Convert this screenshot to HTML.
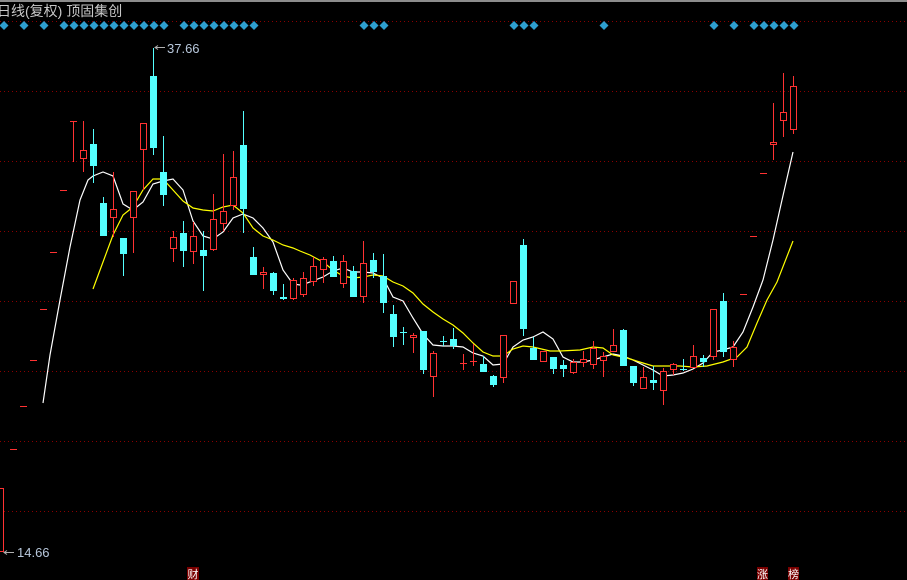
<!DOCTYPE html>
<html><head><meta charset="utf-8"><style>
html,body{margin:0;padding:0;background:#000;width:907px;height:580px;overflow:hidden}
svg{display:block}
text{font-family:"Liberation Sans","Noto Sans CJK SC",sans-serif}
</style></head><body>
<svg width="907" height="580" viewBox="0 0 907 580" xmlns="http://www.w3.org/2000/svg">
<rect width="907" height="580" fill="#000"/>
<rect x="0" y="0" width="907" height="2" fill="#8c8c8c"/>
<g stroke="#8a0000" stroke-width="1" stroke-dasharray="1 3" shape-rendering="crispEdges">
<line x1="0" y1="21.5" x2="907" y2="21.5"/><line x1="0" y1="91.5" x2="907" y2="91.5"/>
<line x1="0" y1="161.5" x2="907" y2="161.5"/><line x1="0" y1="231.5" x2="907" y2="231.5"/>
<line x1="0" y1="301.5" x2="907" y2="301.5"/><line x1="0" y1="371.5" x2="907" y2="371.5"/>
<line x1="0" y1="441.5" x2="907" y2="441.5"/><line x1="0" y1="511.5" x2="907" y2="511.5"/>
</g>
<text x="-3" y="16" font-size="14" fill="#c8c8c8">日线(复权) 顶固集创</text>
<g fill="#2e9fd0">
<path d="M4 21l4.5 4.5L4 30l-4.5-4.5z" id="d"/>
<use href="#d" x="20"/><use href="#d" x="40"/><use href="#d" x="60"/><use href="#d" x="70"/><use href="#d" x="80"/><use href="#d" x="90"/><use href="#d" x="100"/><use href="#d" x="110"/><use href="#d" x="120"/><use href="#d" x="130"/><use href="#d" x="140"/><use href="#d" x="150"/><use href="#d" x="160"/><use href="#d" x="180"/><use href="#d" x="190"/><use href="#d" x="200"/><use href="#d" x="210"/><use href="#d" x="220"/><use href="#d" x="230"/><use href="#d" x="240"/><use href="#d" x="250"/>
<use href="#d" x="360"/><use href="#d" x="370"/><use href="#d" x="380"/>
<use href="#d" x="510"/><use href="#d" x="520"/><use href="#d" x="530"/>
<use href="#d" x="600"/><use href="#d" x="710"/><use href="#d" x="730"/>
<use href="#d" x="750"/><use href="#d" x="760"/><use href="#d" x="770"/><use href="#d" x="780"/><use href="#d" x="790"/>
</g>
<!-- MA lines -->
<polyline fill="none" stroke="#ffffff" stroke-width="1.2" points="43,403 50,355 60,300 70,247 80,200 88,180 93,176 103,172 113,176 123,204 133,210 143,202 153,184 163,181 173,179 183,190 193,221 203,236 213,239 223,232 233,218 243,214 253,218 263,228 273,242 283,270 293,284 300,285 307,283 323,277 333,271 343,268 353,272 363,272 373,273 383,278 393,297 403,301 413,318 423,334 433,345 443,346 453,346 463,347 473,353 483,356 493,365 503,364 513,347 523,340 533,337 543,332 553,339 563,357 573,362 583,362 593,360 603,357 613,354 623,356 633,360 643,365 653,370 663,376 673,375 683,373 693,369 703,363 713,352 723,350 733,347 743,332 753,307 763,280 773,240 782,200 793,152"/>
<polyline fill="none" stroke="#ffff00" stroke-width="1.2" points="93,289 103,262 113,235 123,215 133,207 143,190 153,179 163,179 173,190 183,201 193,208 203,210 213,211 223,207 233,205 243,213 253,228 263,236 273,240 283,245 293,248 300,251 310,255 323,262 333,270 343,276 353,278 363,277 373,275 383,276 393,282 403,286 413,293 423,304 433,312 443,319 453,325 463,333 473,343 483,352 493,356 503,356 513,349 523,346 533,347 550,351 560,351 580,350 593,347 603,348 613,355 627,358 643,363 653,366 680,366 693,367 707,366 723,362 737,357 747,347 757,323 767,300 777,282 793,241"/>
<!-- red candles -->
<g stroke="#ff3232" stroke-width="1" fill="#000" shape-rendering="crispEdges">
<rect x="-3.5" y="488.5" width="7" height="63"/>
<line x1="10" y1="449.5" x2="17" y2="449.5"/><line x1="20" y1="406.5" x2="27" y2="406.5"/><line x1="30" y1="360.5" x2="37" y2="360.5"/><line x1="40" y1="309.5" x2="47" y2="309.5"/><line x1="50" y1="252.5" x2="57" y2="252.5"/><line x1="60" y1="190.5" x2="67" y2="190.5"/>
<line x1="70" y1="121.5" x2="77" y2="121.5"/><line x1="73.5" y1="121" x2="73.5" y2="162"/>
<line x1="83.5" y1="121" x2="83.5" y2="172"/><rect x="80.5" y="150.5" width="6" height="8"/>
<line x1="113.5" y1="172" x2="113.5" y2="237"/><rect x="110.5" y="209.5" width="6" height="8"/>
<line x1="133.5" y1="191" x2="133.5" y2="253"/><rect x="130.5" y="191.5" width="6" height="26"/>
<line x1="143.5" y1="123" x2="143.5" y2="190"/><rect x="140.5" y="123.5" width="6" height="26"/>
<line x1="173.5" y1="231" x2="173.5" y2="262"/><rect x="170.5" y="237.5" width="6" height="11"/>
<line x1="193.5" y1="222" x2="193.5" y2="264"/><rect x="190.5" y="236.5" width="6" height="15"/>
<line x1="213.5" y1="194" x2="213.5" y2="251"/><rect x="210.5" y="219.5" width="6" height="30"/>
<line x1="223.5" y1="154" x2="223.5" y2="231"/><rect x="220.5" y="211.5" width="6" height="12"/>
<line x1="233.5" y1="151" x2="233.5" y2="210"/><rect x="230.5" y="177.5" width="6" height="28"/>
<line x1="263.5" y1="267" x2="263.5" y2="289"/><rect x="260.5" y="272.5" width="6" height="2"/>
<line x1="293.5" y1="278" x2="293.5" y2="300"/><rect x="290.5" y="280.5" width="6" height="18"/>
<line x1="303.5" y1="272" x2="303.5" y2="297"/><rect x="300.5" y="278.5" width="6" height="16"/>
<line x1="313.5" y1="257" x2="313.5" y2="286"/><rect x="310.5" y="266.5" width="6" height="15"/>
<line x1="323.5" y1="257" x2="323.5" y2="283"/><rect x="320.5" y="259.5" width="6" height="10"/>
<line x1="343.5" y1="255" x2="343.5" y2="288"/><rect x="340.5" y="261.5" width="6" height="22"/>
<line x1="363.5" y1="241" x2="363.5" y2="303"/><rect x="360.5" y="263.5" width="6" height="33"/>
<line x1="413.5" y1="333" x2="413.5" y2="353"/><rect x="410.5" y="335.5" width="6" height="2"/>
<line x1="433.5" y1="351" x2="433.5" y2="397"/><rect x="430.5" y="353.5" width="6" height="23"/>
<line x1="463.5" y1="354" x2="463.5" y2="370"/><line x1="460" y1="363.5" x2="467" y2="363.5"/>
<line x1="473.5" y1="344" x2="473.5" y2="366"/><line x1="470" y1="361.5" x2="477" y2="361.5"/>
<line x1="503.5" y1="335" x2="503.5" y2="383"/><rect x="500.5" y="335.5" width="6" height="42"/>
<rect x="510.5" y="281.5" width="6" height="22"/>
<line x1="543.5" y1="351" x2="543.5" y2="361"/><rect x="540.5" y="351.5" width="6" height="10"/>
<line x1="573.5" y1="359" x2="573.5" y2="374"/><rect x="570.5" y="362.5" width="6" height="10"/>
<line x1="583.5" y1="351" x2="583.5" y2="367"/><rect x="580.5" y="359.5" width="6" height="3"/>
<line x1="593.5" y1="341" x2="593.5" y2="369"/><rect x="590.5" y="348.5" width="6" height="16"/>
<line x1="603.5" y1="352" x2="603.5" y2="377"/><rect x="600.5" y="356.5" width="6" height="4"/>
<line x1="613.5" y1="329" x2="613.5" y2="351"/><rect x="610.5" y="345.5" width="6" height="6"/>
<line x1="643.5" y1="367" x2="643.5" y2="388"/><rect x="640.5" y="377.5" width="6" height="11"/>
<line x1="663.5" y1="368" x2="663.5" y2="405"/><rect x="660.5" y="371.5" width="6" height="19"/>
<line x1="673.5" y1="363" x2="673.5" y2="375"/><rect x="670.5" y="364.5" width="6" height="5"/>
<line x1="693.5" y1="345" x2="693.5" y2="367"/><rect x="690.5" y="356.5" width="6" height="11"/>
<line x1="713.5" y1="309" x2="713.5" y2="360"/><rect x="710.5" y="309.5" width="6" height="47"/>
<line x1="733.5" y1="341" x2="733.5" y2="367"/><rect x="730.5" y="347.5" width="6" height="12"/>
<line x1="740" y1="294.5" x2="747" y2="294.5"/><line x1="750" y1="236.5" x2="757" y2="236.5"/><line x1="760" y1="173.5" x2="767" y2="173.5"/>
<line x1="773.5" y1="103" x2="773.5" y2="160"/><rect x="770.5" y="142.5" width="6" height="2"/>
<line x1="783.5" y1="73" x2="783.5" y2="137"/><rect x="780.5" y="112.5" width="6" height="8"/>
<line x1="793.5" y1="76" x2="793.5" y2="134"/><rect x="790.5" y="86.5" width="6" height="43"/>
</g>
<!-- cyan candles -->
<g fill="#54ffff" stroke="#54ffff" stroke-width="1" shape-rendering="crispEdges">
<line x1="93.5" y1="129" x2="93.5" y2="183"/><rect x="90.5" y="144.5" width="6" height="21"/>
<line x1="103.5" y1="197" x2="103.5" y2="235"/><rect x="100.5" y="203.5" width="6" height="32"/>
<line x1="123.5" y1="238" x2="123.5" y2="276"/><rect x="120.5" y="238.5" width="6" height="15"/>
<line x1="153.5" y1="48" x2="153.5" y2="155"/><rect x="150.5" y="76.5" width="6" height="71"/>
<line x1="163.5" y1="136" x2="163.5" y2="206"/><rect x="160.5" y="172.5" width="6" height="22"/>
<line x1="183.5" y1="221" x2="183.5" y2="267"/><rect x="180.5" y="233.5" width="6" height="17"/>
<line x1="203.5" y1="231" x2="203.5" y2="291"/><rect x="200.5" y="250.5" width="6" height="5"/>
<line x1="243.5" y1="111" x2="243.5" y2="233"/><rect x="240.5" y="145.5" width="6" height="63"/>
<line x1="253.5" y1="247" x2="253.5" y2="274"/><rect x="250.5" y="257.5" width="6" height="17"/>
<line x1="273.5" y1="272" x2="273.5" y2="295"/><rect x="270.5" y="273.5" width="6" height="17"/>
<line x1="283.5" y1="284" x2="283.5" y2="300"/><rect x="280.5" y="297.5" width="6" height="1"/>
<line x1="333.5" y1="256" x2="333.5" y2="276"/><rect x="330.5" y="261.5" width="6" height="15"/>
<line x1="353.5" y1="266" x2="353.5" y2="297"/><rect x="350.5" y="271.5" width="6" height="25"/>
<line x1="373.5" y1="253" x2="373.5" y2="278"/><rect x="370.5" y="260.5" width="6" height="11"/>
<line x1="383.5" y1="254" x2="383.5" y2="313"/><rect x="380.5" y="276.5" width="6" height="26"/>
<line x1="393.5" y1="305" x2="393.5" y2="347"/><rect x="390.5" y="314.5" width="6" height="22"/>
<line x1="403.5" y1="327" x2="403.5" y2="345"/><line x1="400" y1="332.5" x2="407" y2="332.5"/>
<line x1="423.5" y1="331" x2="423.5" y2="374"/><rect x="420.5" y="331.5" width="6" height="38"/>
<line x1="443.5" y1="336" x2="443.5" y2="346"/><line x1="440" y1="341.5" x2="447" y2="341.5"/>
<line x1="453.5" y1="328" x2="453.5" y2="349"/><rect x="450.5" y="339.5" width="6" height="6"/>
<line x1="483.5" y1="356" x2="483.5" y2="371"/><rect x="480.5" y="364.5" width="6" height="7"/>
<line x1="493.5" y1="375" x2="493.5" y2="387"/><rect x="490.5" y="376.5" width="6" height="8"/>
<line x1="523.5" y1="239" x2="523.5" y2="336"/><rect x="520.5" y="245.5" width="6" height="83"/>
<line x1="533.5" y1="337" x2="533.5" y2="359"/><rect x="530.5" y="348.5" width="6" height="11"/>
<line x1="553.5" y1="357" x2="553.5" y2="374"/><rect x="550.5" y="357.5" width="6" height="11"/>
<line x1="563.5" y1="360" x2="563.5" y2="377"/><rect x="560.5" y="365.5" width="6" height="3"/>
<line x1="623.5" y1="329" x2="623.5" y2="365"/><rect x="620.5" y="330.5" width="6" height="35"/>
<line x1="633.5" y1="366" x2="633.5" y2="386"/><rect x="630.5" y="366.5" width="6" height="16"/>
<line x1="653.5" y1="366" x2="653.5" y2="390"/><rect x="650.5" y="380.5" width="6" height="2"/>
<line x1="683.5" y1="359" x2="683.5" y2="371"/><line x1="680" y1="369.5" x2="687" y2="369.5"/>
<line x1="703.5" y1="355" x2="703.5" y2="367"/><rect x="700.5" y="358.5" width="6" height="3"/>
<line x1="723.5" y1="293" x2="723.5" y2="357"/><rect x="720.5" y="301.5" width="6" height="50"/>
</g>
<!-- labels -->
<g stroke="#b0b0b0" stroke-width="1" fill="none">
<line x1="155" y1="47.5" x2="165" y2="47.5"/><path d="M158 45.5l-3 2 3 2"/>
<line x1="4" y1="552.5" x2="14" y2="552.5"/><path d="M7 550.5l-3 2 3 2"/>
</g>
<text x="167" y="53" font-size="13" fill="#b8c8dc">37.66</text>
<text x="17" y="557" font-size="13" fill="#b8c8dc">14.66</text>
<rect x="187" y="567" width="12" height="13" fill="#7a0000"/>
<rect x="757" y="567" width="11" height="13" fill="#7a0000"/>
<rect x="788" y="567" width="11" height="13" fill="#7a0000"/>
<g font-size="11" fill="#ffffff">
<text x="187.5" y="578">财</text><text x="757" y="578">涨</text><text x="788" y="578">榜</text>
</g>
</svg>
</body></html>
